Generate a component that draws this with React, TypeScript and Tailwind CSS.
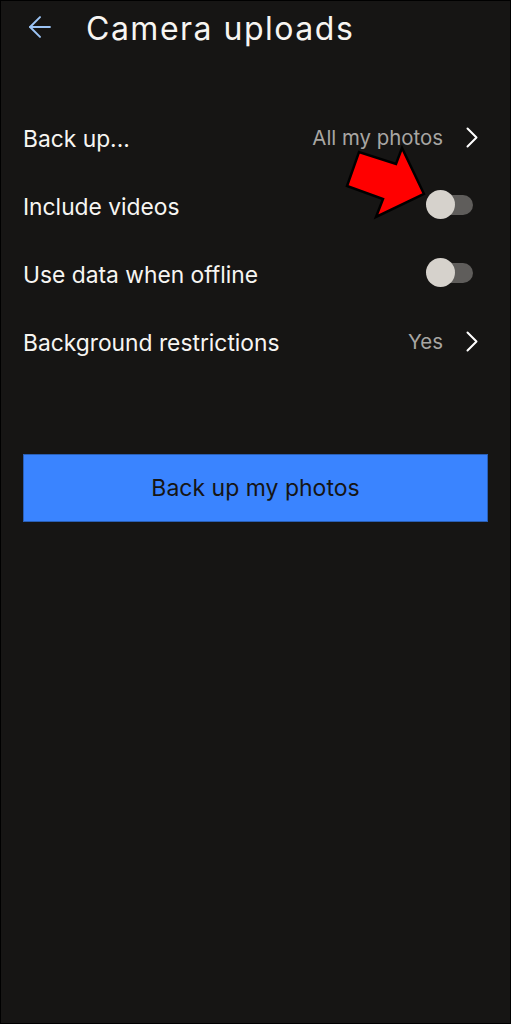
import { ArrowLeft } from 'lucide-react';

function Chevron() {
  return (
    <svg className="-mt-[2px]" width="12" height="21" viewBox="0 0 12 21" fill="none" stroke="#ffffff" strokeWidth="2" strokeLinecap="round" strokeLinejoin="round">
      <polyline points="1.5,1.5 10.5,10.5 1.5,19.5" />
    </svg>
  );
}

function Toggle() {
  return (
    <div className="relative w-[47px] h-[20px] mr-[15px] -mt-[4px]">
      <div className="absolute left-[14px] right-0 top-0 h-[20px] rounded-full bg-[#5f5d5b]" />
      <div className="absolute left-0 -top-[5px] w-[29px] h-[29px] rounded-full bg-[#d6d2cc]" />
    </div>
  );
}

function ValueRow({ label, value }: { label: string; value: string }) {
  return (
    <div className="h-[68px] flex items-center justify-between pl-[22px] pr-[32px]">
      <span className="text-[22.8px] text-[#f7f5f2]">{label}</span>
      <div className="flex items-center gap-[23px]">
        <span className="text-[20.4px] text-[#a8a6a3] -mt-[2px]">{value}</span>
        <Chevron />
      </div>
    </div>
  );
}

function ToggleRow({ label }: { label: string }) {
  return (
    <div className="h-[68px] flex items-center justify-between pl-[22px] pr-[22px]">
      <span className="text-[22.8px] text-[#f7f5f2]">{label}</span>
      <Toggle />
    </div>
  );
}

export default function App() {
  return (
    <div className="relative w-[511px] h-[1024px] bg-[#161514] border border-black font-['Inter',sans-serif] overflow-hidden">
      {/* Header */}
      <div className="h-[56px] flex items-center pl-[22px]">
        <ArrowLeft className="w-[34px] h-[34px] text-[#9cc4f5] -mt-[5px]" strokeWidth={1.4} />
        <h1 className="ml-[29px] text-[32px] tracking-[1.5px] text-[#f7f5f2]">Camera uploads</h1>
      </div>

      {/* Settings */}
      <div className="mt-[48px]">
        <ValueRow label="Back up..." value="All my photos" />
        <ToggleRow label="Include videos" />
        <ToggleRow label="Use data when offline" />
        <ValueRow label="Background restrictions" value="Yes" />
      </div>

      <div className="mt-[77px] mx-[22px] h-[68px] flex items-center justify-center bg-[#3a84ff] border border-[#2a5fb5] text-[23px] text-[#161514]">
        Back up my photos
      </div>

      {/* Red arrow annotation */}
      <svg className="absolute left-[340px] top-[140px]" width="90" height="84" viewBox="340 140 90 84">
        <polygon
          points="423,193 401,147 395,163 358,151 346,185 382,198 375,216"
          fill="#ff0000"
          stroke="#000000"
          strokeWidth="2.5"
        />
      </svg>
    </div>
  );
}
